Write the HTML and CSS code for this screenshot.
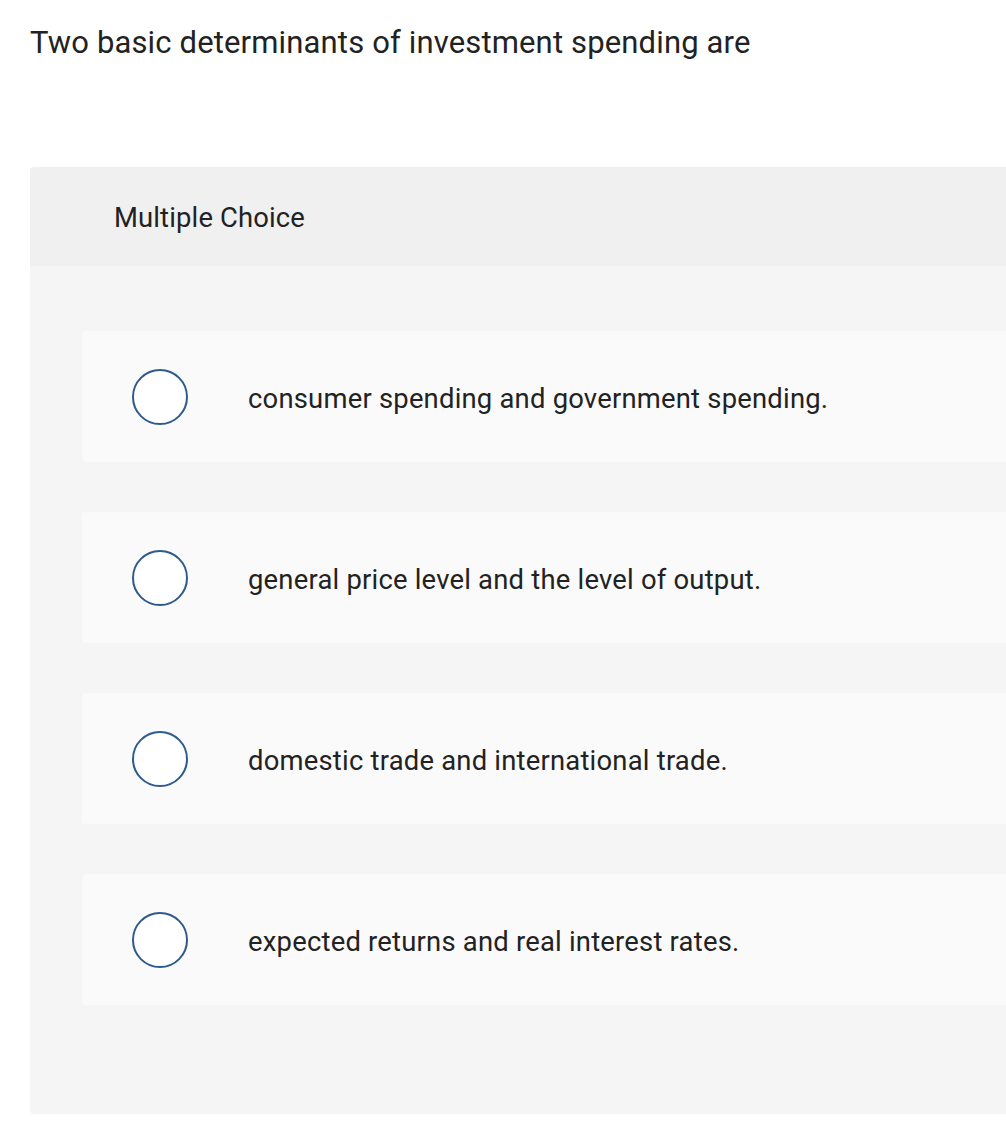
FILE: index.html
```html
<!DOCTYPE html>
<html lang="en">
<head>
<meta charset="utf-8">
<title>Multiple Choice</title>
<link rel="stylesheet" href="styles.css">
</head>
<body>
  <main class="page">
    <h1 class="prompt">Two basic determinants of investment spending are</h1>
    <section class="card">
      <header class="card-header">Multiple Choice</header>
      <div class="card-body">
        <label class="option"><span class="radio"></span><span class="option-text">consumer spending and government spending.</span></label>
        <label class="option"><span class="radio"></span><span class="option-text">general price level and the level of output.</span></label>
        <label class="option"><span class="radio"></span><span class="option-text">domestic trade and international trade.</span></label>
        <label class="option"><span class="radio"></span><span class="option-text">expected returns and real interest rates.</span></label>
      </div>
    </section>
  </main>
</body>
</html>
```

FILE: styles.css
```css
html, body {
  margin: 0;
  padding: 0;
  background: #ffffff;
  overflow-x: hidden;
}

body {
  font-family: Roboto, "Liberation Sans", sans-serif;
  color: #222222;
}

.page {
  padding: 0 0 0 30px;
}

.prompt {
  margin: 0;
  padding-top: 23px;
  height: 167px;
  box-sizing: border-box;
  font-size: 31px;
  font-weight: 400;
  line-height: 40px;
  letter-spacing: 0.15px;
  color: #222222;
}

.card {
  border-radius: 4px 0 0 4px;
  overflow: hidden;
  background: #f5f5f5;
}

.card-header {
  height: 99px;
  box-sizing: border-box;
  display: flex;
  align-items: center;
  padding-left: 84px;
  padding-top: 2px;
  background: #f0f0f0;
  font-size: 27.4px;
  letter-spacing: 0.15px;
  color: #222222;
}

.card-body {
  display: flex;
  flex-direction: column;
  gap: 50px;
  padding: 65px 0 109px 52px;
}

.option {
  height: 131px;
  display: flex;
  align-items: center;
  padding-left: 50px;
  gap: 60px;
  background: #fafafa;
  border-radius: 4px 0 0 4px;
}

.radio {
  flex: none;
  width: 56px;
  height: 56px;
  box-sizing: border-box;
  border: 2.3px solid #2d5b8e;
  border-radius: 50%;
  background: #ffffff;
}

.option-text {
  padding-top: 4px;
  font-size: 27.4px;
  letter-spacing: 0.22px;
  color: #222222;
}
```
